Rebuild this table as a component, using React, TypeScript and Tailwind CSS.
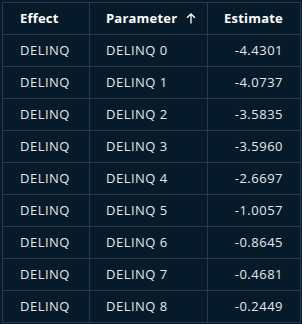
import React from 'react';

const rows = [
  { effect: 'DELINQ', param: 'DELINQ 0', est: '-4.4301' },
  { effect: 'DELINQ', param: 'DELINQ 1', est: '-4.0737' },
  { effect: 'DELINQ', param: 'DELINQ 2', est: '-3.5835' },
  { effect: 'DELINQ', param: 'DELINQ 3', est: '-3.5960' },
  { effect: 'DELINQ', param: 'DELINQ 4', est: '-2.6697' },
  { effect: 'DELINQ', param: 'DELINQ 5', est: '-1.0057' },
  { effect: 'DELINQ', param: 'DELINQ 6', est: '-0.8645' },
  { effect: 'DELINQ', param: 'DELINQ 7', est: '-0.4681' },
  { effect: 'DELINQ', param: 'DELINQ 8', est: '-0.2449' },
];

export default function App() {
  return (
    <div
      className="w-[302px] h-[324px] bg-[#071a29] p-[2px] overflow-hidden"
      style={{ fontFamily: '"Open Sans", "Noto Sans", sans-serif' }}
    >
      <table className="w-[298px] border-collapse text-[13px] table-fixed">
        <colgroup>
          <col className="w-[87px]" />
          <col className="w-[118px]" />
          <col className="w-[93px]" />
        </colgroup>
        <thead>
          <tr className="h-[32px] tracking-[0.2px]">
            <th className="border border-[#27394a] pl-[17px] text-left font-bold text-white">
              Effect
            </th>
            <th className="border border-[#27394a] pl-[16px] text-left font-bold text-white">
              <span className="inline-flex items-center gap-[9px]">
                Parameter
                <svg width="10" height="11" viewBox="0 0 10 11" fill="none">
                  <path
                    d="M5 10.5V1M1 4.8L5 1l4 3.8"
                    stroke="white"
                    strokeWidth="1.3"
                  />
                </svg>
              </span>
            </th>
            <th className="border border-[#27394a] pr-[17px] text-right font-bold text-white">
              Estimate
            </th>
          </tr>
        </thead>
        <tbody>
          {rows.map((r) => (
            <tr key={r.param} className="h-[32px] text-[#e3e8ec] tracking-[0.5px]">
              <td className="border border-[#27394a] pl-[17px] text-left">
                {r.effect}
              </td>
              <td className="border border-[#27394a] pl-[16px] text-left">
                {r.param}
              </td>
              <td className="border border-[#27394a] pr-[17px] text-right">
                {r.est}
              </td>
            </tr>
          ))}
        </tbody>
      </table>
    </div>
  );
}
